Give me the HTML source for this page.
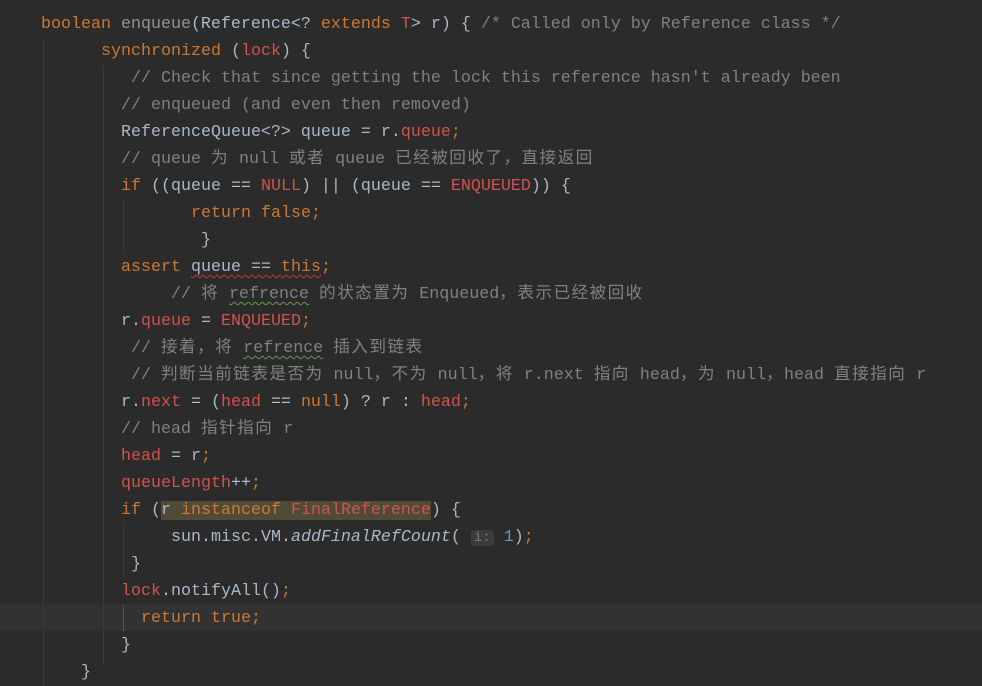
<!DOCTYPE html>
<html><head><meta charset="utf-8"><style>
html,body{margin:0;padding:0;background:#2b2b2b;width:982px;height:686px;overflow:hidden}
.l{position:absolute;white-space:pre;font-family:"Liberation Mono","Noto Sans CJK SC",monospace;font-size:16.67px;line-height:27px;color:#a9b7c6;height:27px}
.k{color:#cc7832}.r{color:#d0524f}.c{color:#808080}.n{color:#6897bb}.g{color:#939393}
.i{font-style:italic}
.z{letter-spacing:1.4px}
.wr{text-decoration:underline wavy #bc3f3c;text-decoration-thickness:1px;text-underline-offset:3px}
.wg{text-decoration:underline wavy #629755;text-decoration-thickness:1px;text-underline-offset:3px}
.v{position:absolute;width:1px;background:#3a3a3a}
.hl{background:#4f4b37}
.hint{background:#3b3b3b;color:#787878;border-radius:3px;font-size:14px;padding:0 3px}
</style></head><body>
<div style="position:absolute;left:0;top:604px;width:982px;height:27px;background:#323232"></div>
<div class="v" style="left:43px;top:38px;height:648px"></div>
<div class="v" style="left:103px;top:65px;height:600px"></div>
<div class="v" style="left:123px;top:200px;height:54px"></div>
<div class="v" style="left:123px;top:524px;height:54px"></div>
<div class="v" style="left:123px;top:605px;height:26px;background:#555"></div>

<div class="l" style="left:41px;top:11px"><span class="k">boolean</span> <span class="g">enqueue</span>(Reference&lt;? <span class="k">extends</span> <span class="r">T</span>&gt; r) { <span class="c">/* Called only by Reference class */</span></div>
<div class="l" style="left:101px;top:38px"><span class="k">synchronized</span> (<span class="r">lock</span>) {</div>
<div class="l c" style="left:131px;top:65px">// Check that since getting the lock this reference hasn't already been</div>
<div class="l c" style="left:121px;top:92px">// enqueued (and even then removed)</div>
<div class="l" style="left:121px;top:119px">ReferenceQueue&lt;?&gt; queue = r.<span class="r">queue</span><span class="k">;</span></div>
<div class="l c" style="left:121px;top:146px">// queue <span class="z">为</span> null <span class="z">或者</span> queue <span class="z">已经被回收了，直接返回</span></div>
<div class="l" style="left:121px;top:173px"><span class="k">if</span> ((queue == <span class="r">NULL</span>) || (queue == <span class="r">ENQUEUED</span>)) {</div>
<div class="l" style="left:191px;top:200px"><span class="k">return false;</span></div>
<div class="l" style="left:201px;top:227px">}</div>
<div class="l" style="left:121px;top:254px"><span class="k">assert</span> <span class="wr">queue == <span class="k">this</span></span><span class="k">;</span></div>
<div class="l c" style="left:171px;top:281px">// <span class="z">将</span> <span class="wg">refrence</span> <span class="z">的状态置为</span> Enqueued<span class="z">，表示已经被回收</span></div>
<div class="l" style="left:121px;top:308px">r.<span class="r">queue</span> = <span class="r">ENQUEUED</span><span class="k">;</span></div>
<div class="l c" style="left:131px;top:335px">// <span class="z">接着，将</span> <span class="wg">refrence</span> <span class="z">插入到链表</span></div>
<div class="l c" style="left:131px;top:362px">// <span class="z">判断当前链表是否为</span> null<span class="z">，不为</span> null<span class="z">，将</span> r.next <span class="z">指向</span> head<span class="z">，为</span> null<span class="z">，</span>head <span class="z">直接指向</span> r</div>
<div class="l" style="left:121px;top:389px">r.<span class="r">next</span> = (<span class="r">head</span> == <span class="k">null</span>) ? r : <span class="r">head</span><span class="k">;</span></div>
<div class="l c" style="left:121px;top:416px">// head <span class="z">指针指向</span> r</div>
<div class="l" style="left:121px;top:443px"><span class="r">head</span> = r<span class="k">;</span></div>
<div class="l" style="left:121px;top:470px"><span class="r">queueLength</span>++<span class="k">;</span></div>
<div class="l" style="left:121px;top:497px"><span class="k">if</span> (<span class="hl">r <span class="k">instanceof</span> <span class="r">FinalReference</span></span>) {</div>
<div class="l" style="left:171px;top:524px">sun.misc.VM.<span class="i">addFinalRefCount</span>( <span class="hint">i:</span> <span class="n">1</span>)<span class="k">;</span></div>
<div class="l" style="left:131px;top:551px">}</div>
<div class="l" style="left:121px;top:578px"><span class="r">lock</span>.notifyAll()<span class="k">;</span></div>
<div class="l" style="left:141px;top:605px"><span class="k">return true;</span></div>
<div class="l" style="left:121px;top:632px">}</div>
<div class="l" style="left:81px;top:659px">}</div>
</body></html>
